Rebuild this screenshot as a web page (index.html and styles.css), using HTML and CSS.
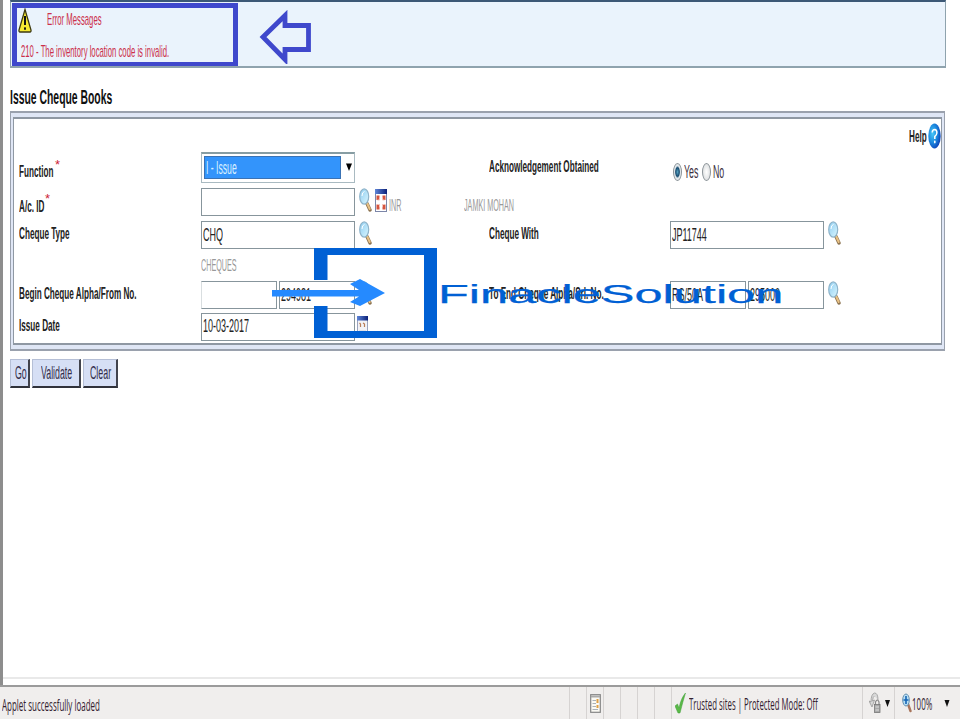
FILE: index.html
```html
<!DOCTYPE html>
<html lang="en">
<head>
    <meta charset="UTF-8">
    <meta name="viewport" content="width=device-width, initial-scale=1.0">
    <title>Issue Cheque Books</title>
    <link rel="stylesheet" href="styles.css">
</head>
<body>
    <!-- Shared icons -->
    <svg class="defs" width="0" height="0">
        <defs>
            <linearGradient id="glass" x1="0" y1="0" x2="1" y2="1">
                <stop offset="0" stop-color="#8fcdf0"/>
                <stop offset="1" stop-color="#d9f6ff"/>
            </linearGradient>
            <radialGradient id="ball" cx="0.35" cy="0.4" r="0.75">
                <stop offset="0" stop-color="#48c8f8"/>
                <stop offset="0.5" stop-color="#1a86dd"/>
                <stop offset="1" stop-color="#0a2fae"/>
            </radialGradient>
            <linearGradient id="bar" x1="0" y1="0" x2="1" y2="0">
                <stop offset="0" stop-color="#5f86d8"/>
                <stop offset="1" stop-color="#0b2078"/>
            </linearGradient>
            <symbol id="search" viewBox="0 0 13 25">
                <path d="M8 15.500L11 22" stroke="#8d7350" stroke-width="3.400" stroke-linecap="round"/>
                <path d="M8.200 15.500L10.700 21" stroke="#e8c184" stroke-width="2" stroke-linecap="round"/>
                <ellipse cx="5.200" cy="8.500" rx="4.500" ry="7.600" fill="url(#glass)" stroke="#8fb4ca" stroke-width="1.200"/>
                <path d="M3 8Q3 4 5.500 3.500" stroke="#fff" stroke-width="1" fill="none"/>
            </symbol>
        </defs>
    </svg>

    <div class="page">
        <!-- Error box -->
        <div class="error-panel">
            <div class="error-box">
                <div class="error-head">
                    <svg class="warn" width="14" height="25" viewBox="0 0 14 25">
                        <path d="M7 1.500L13 22Q13.200 24 12 24H2Q.8 24 1 22Z" fill="#f5e932" stroke="#3d3910" stroke-width="1.300"/>
                        <path d="M7 8V17" stroke="#111" stroke-width="2"/>
                        <ellipse cx="7" cy="20.500" rx="1" ry="1.500" fill="#111"/>
                    </svg>
                    <span class="t err">Error Messages</span>
                </div>
                <div class="error-line"><span class="t err">210 - The inventory location code is invalid.</span></div>
            </div>
            <svg class="left-arrow" width="56" height="54" viewBox="0 0 56 54">
                <path d="M5 27L27 5.500V15.500H50.500V39.500H27V49.500Z" fill="none" stroke="#3f48cc" stroke-width="4.800"/>
            </svg>
        </div>

        <h1><span class="t title">Issue Cheque Books</span></h1>

        <!-- Form -->
        <div class="panel">
            <div class="panel-inner">
                <div class="help">
                    <span class="help-text"><span class="t label">Help</span></span>
                    <svg width="13" height="26" viewBox="0 0 13 26">
                        <ellipse cx="6.500" cy="13" rx="6.200" ry="12.500" fill="url(#ball)"/>
                        <path d="M4.200 9.500Q4.500 6.500 6.700 6.500Q9 6.700 8.900 10Q8.500 12.500 6.800 13.500V16" fill="none" stroke="#fff" stroke-width="1.500"/>
                        <ellipse cx="6.800" cy="19" rx=".9" ry="1.400" fill="#fff"/>
                    </svg>
                </div>
                <div class="row row-function">
                    <div class="name down"><span class="t label">Function</span><span class="star star-function">*</span></div>
                    <div class="field">
                        <div class="select">
                            <div class="selected"><span class="t option">I - Issue</span></div>
                            <svg width="6" height="9" viewBox="0 0 6 9"><path d="M0 0.500H6L3 8Z" fill="#000"/></svg>
                        </div>
                    </div>
                    <div class="name"><span class="t label">Acknowledgement Obtained</span></div>
                    <div class="field radios">
                        <span class="radio checked"></span><span class="radio-text yes"><span class="t plain">Yes</span></span>
                        <span class="radio"></span><span class="radio-text"><span class="t plain">No</span></span>
                    </div>
                </div>
                <div class="row row-account">
                    <div class="name down"><span class="t label">A/c. ID</span><span class="star star-account">*</span></div>
                    <div class="field">
                        <div class="input wide"></div>
                        <svg class="lens" width="13" height="25"><use href="#search"/></svg>
                        <svg class="expand" width="12" height="23" viewBox="0 0 12 23">
                            <rect x=".5" y=".5" width="11" height="22" fill="#fff" stroke="#7c86a8"/>
                            <rect width="12" height="5" fill="url(#bar)"/>
                            <path d="M1.500 6.500H4.500V11H1.500ZM7.500 6.500H10.500V11H7.500ZM1.500 15.500H4.500V20.500H1.500ZM7.500 15.500H10.500V20.500H7.500Z" fill="#d6543e"/>
                            <path d="M4.500 8.500V11H2.500M7.500 8.500V11H9.500M4.500 18V15.500H2.500M7.500 18V15.500H9.500" stroke="#f4c5ba" stroke-width="1" fill="none"/>
                        </svg>
                        <span class="t note inr">INR</span>
                    </div>
                    <div class="name holder"><span class="t note">JAMKI MOHAN</span></div>
                    <div class="field"></div>
                </div>
                <div class="row row-type">
                    <div class="name up"><span class="t label">Cheque Type</span></div>
                    <div class="field">
                        <div class="input wide"><span class="t value">CHQ</span></div>
                        <svg class="lens" width="13" height="25"><use href="#search"/></svg>
                    </div>
                    <div class="name up"><span class="t label">Cheque With</span></div>
                    <div class="field">
                        <div class="input wide"><span class="t value">JP11744</span></div>
                        <svg class="lens" width="13" height="25"><use href="#search"/></svg>
                    </div>
                </div>
                <div class="row row-note">
                    <div class="name"></div>
                    <div class="field cheques"><span class="t note">CHEQUES</span></div>
                </div>
                <div class="row row-number">
                    <div class="name up"><span class="t label">Begin Cheque Alpha/From No.</span></div>
                    <div class="field">
                        <div class="input half blank"></div>
                        <div class="input half"><span class="t value">294981</span></div>
                        <svg class="lens" width="13" height="25"><use href="#search"/></svg>
                    </div>
                    <div class="name up"><span class="t label">To End Cheque Alpha/Srl. No.</span></div>
                    <div class="field">
                        <div class="input half"><span class="t value">RS/50A</span></div>
                        <div class="input half"><span class="t value">295000</span></div>
                        <svg class="lens" width="13" height="25"><use href="#search"/></svg>
                    </div>
                </div>
                <div class="row row-date">
                    <div class="name date"><span class="t label">Issue Date</span></div>
                    <div class="field">
                        <div class="input wide"><span class="t value">10-03-2017</span></div>
                        <svg class="calendar" width="11" height="22" viewBox="0 0 11 22">
                            <rect x=".5" y=".5" width="10" height="21" fill="#f3f3f6" stroke="#9aa3bd"/>
                            <rect width="11" height="4.500" fill="url(#bar)"/>
                            <path d="M2.500 7L3.500 8V11M6 7L7.500 8V11" stroke="#b87d58" stroke-width="1.200" fill="none"/>
                            <path d="M2 15H9" stroke="#cfcfd8"/>
                        </svg>
                    </div>
                </div>
            </div>
        </div>

        <div class="buttons">
            <div class="button go"><span class="t action">Go</span></div>
            <div class="button validate"><span class="t action">Validate</span></div>
            <div class="button clear"><span class="t action">Clear</span></div>
        </div>
    </div>

    <!-- Watermark over the form -->
    <div class="watermark">
        <svg width="166" height="90" viewBox="0 0 166 90">
            <path d="M42 0H165V90H42V58H55.500V83H152V7H55.500V32H42Z" fill="#0060d4"/>
            <path d="M0 42H87L78 36L88 31L113 45L88 58L78 54L87 48.500H0Z" fill="#258aff"/>
        </svg>
        <span class="t brand">FinacleSolution</span>
    </div>

    <!-- Browser status bar -->
    <div class="status">
        <div class="cell message"><span class="t bar-text">Applet successfully loaded</span></div>
        <div class="cell c17"></div>
        <div class="cell c17 report">
            <svg width="11" height="19" viewBox="0 0 11 19">
                <rect x=".7" y=".7" width="9.600" height="17.600" fill="#fbfaf4" stroke="#858585" stroke-width="1.200"/>
                <path d="M1 2.500H10" stroke="#aaa" stroke-width="2"/>
                <path d="M2.500 6.500H6M2.500 9.500H6M2.500 12.500H6M2.500 15.500H8" stroke="#aab2b8"/>
                <path d="M7.500 5V9M7.500 11V14" stroke="#dfa044" stroke-width="2"/>
            </svg>
        </div>
        <div class="cell c17"></div>
        <div class="cell c17"></div>
        <div class="cell c17"></div>
        <div class="cell c17"></div>
        <div class="cell zone">
            <svg width="11" height="21" viewBox="0 0 11 21">
                <path d="M0 13L2.500 11L4 15Q6 5 10.500 0Q8 8 5 20H3Z" fill="#5ab948" stroke="#3e9c36" stroke-width=".5"/>
            </svg>
            <span class="t bar-text zone-text">Trusted sites | Protected Mode: Off</span>
        </div>
        <div class="cell lock">
            <svg width="12" height="22" viewBox="0 0 12 22">
                <path d="M9 8Q9 1 5.500 1Q2 2 2 10L0 9L3 15L5.500 8L3.500 9Q4 4 5.500 4" fill="#d8d8d8" stroke="#999" stroke-width=".8"/>
                <path d="M6.500 13V10Q8.300 6 10 10V13" fill="none" stroke="#888" stroke-width="1.200"/>
                <rect x="5.500" y="12.500" width="5.500" height="8" fill="#a9a9a9" stroke="#777" stroke-width=".8"/>
                <path d="M6.500 15H10M6.500 18H10" stroke="#ddd"/>
            </svg>
            <svg width="5" height="7" viewBox="0 0 5 7"><path d="M0 0H5L2.500 7Z" fill="#111"/></svg>
        </div>
        <div class="cell percent">
            <svg width="10" height="20" viewBox="0 0 10 20">
                <path d="M6 11L8.500 18" stroke="#a8745b" stroke-width="2.400" stroke-linecap="round"/>
                <ellipse cx="4" cy="7" rx="3.300" ry="6" fill="#b9e0f5" stroke="#638eae"/>
                <path d="M1.500 7H6.500M4 3V11" stroke="#1464b4" stroke-width="1.600"/>
            </svg>
            <span class="percent-text"><span class="t bar-text">100%</span></span>
            <svg width="6" height="7" viewBox="0 0 5 7"><path d="M0 0H5L2.500 7Z" fill="#111"/></svg>
        </div>
    </div>
</body>
</html>
```

FILE: styles.css
```css
* {
    box-sizing: border-box;
}

body {
    margin: 0;
    width: 960px;
    height: 720px;
    overflow: hidden;
    background: #fff;
    font-family: "Liberation Sans", Arial, sans-serif;
    color: #222;
    display: flex;
    flex-direction: column;
}

svg {
    display: block;
    flex: none;
}

.defs {
    position: absolute;
}

.page {
    height: 685px;
    flex: none;
    padding: 0 14px 0 7px;
    border-left: 3px solid #8d8d8d;
    background: linear-gradient(#e9e9e9, #e9e9e9) 0 677px / 100% 2px no-repeat;
}

/* condensed text */
.t {
    display: inline-block;
    white-space: nowrap;
    transform-origin: 0 50%;
}

.label {
    font-size: 16px;
    font-weight: bold;
    transform: scaleX(0.51);
}

.title {
    font-size: 20px;
    font-weight: bold;
    color: #111;
    transform: scaleX(0.52);
}

.err {
    font-size: 17px;
    color: #cb2f4b;
    transform: scaleX(0.455);
}

.value {
    font-size: 18px;
    transform: scaleX(0.5);
}

.option {
    font-size: 18px;
    color: #d8f0ff;
    transform: scaleX(0.48);
}

.plain {
    font-size: 18px;
    color: #3c2f40;
    transform: scaleX(0.49);
}

.note {
    font-size: 16px;
    color: #999;
    transform: scaleX(0.45);
}

.action {
    font-size: 18px;
    color: #332d4a;
    transform: scaleX(0.49);
}

.bar-text {
    font-family: "Open Sans", "Noto Sans", sans-serif;
    font-size: 17px;
    color: #33212f;
    transform: scaleX(0.47);
}

.error-panel {
    height: 68px;
    display: flex;
    align-items: flex-start;
    padding: 3px 0 0 1px;
    background: #eaf3fc;
    border: 1px solid #8fa3ae;
    border-top: 2px solid #3c5876;
    border-bottom-width: 2px;
}

.error-box {
    width: 226px;
    height: 63px;
    margin-top: -2px;
    border: 5px solid #3f48cc;
    border-bottom-width: 4px;
    white-space: nowrap;
}

.error-head {
    display: flex;
    height: 26px;
    padding-left: 1px;
}

.error-head .t {
    margin: 3px 0 0 15px;
    line-height: 18px;
}

.error-line {
    padding-left: 4px;
    line-height: 18px;
    margin-top: 9px;
}

.left-arrow {
    margin: 5px 0 0 20px;
}

h1 {
    margin: 0;
    height: 43px;
    padding-top: 18px;
    line-height: 22px;
    font-size: 20px;
}

h1 .t {
    display: block;
    line-height: 22px;
}

.panel {
    width: 935px;
    height: 240px;
    padding: 4px 2px;
    border: 2px solid #9aa1ad;
    border-width: 2px 1px;
    background: #dfe6f5;
}

.panel-inner {
    height: 228px;
    border: 1px solid #8f98a3;
    border-width: 2px 1px;
    background: #fff;
}

.help {
    display: flex;
    justify-content: flex-end;
    align-items: center;
    height: 30px;
    padding: 3px 0 0 0;
    gap: 1px;
}

.help-text {
    width: 18px;
    padding-top: 2px;
}

.row {
    display: grid;
    grid-template-columns: 182px 288px 181px 1fr;
    padding-left: 5px;
}

.row-function { height: 36px; }
.row-account { height: 34px; }
.row-type { height: 32px; }
.row-note { height: 28px; }
.row-number { height: 32px; }
.row-date { height: 31px; }

.name, .field {
    display: flex;
    align-items: center;
    min-width: 0;
}

.down {
    padding-top: 9px;
}

.up {
    padding-bottom: 3px;
}

.date {
    padding-bottom: 2px;
}

.name {
    position: relative;
}

.star {
    position: absolute;
    color: #cc2436;
    font-size: 13px;
    line-height: 14px;
}

.star-function { left: 36px; top: 9px; }
.star-account { left: 26px; top: 7px; }

.holder {
    margin-left: -25px;
    padding-top: 8px;
}

.cheques {
    padding-top: 2px;
}

.input {
    height: 28px;
    flex: none;
    display: flex;
    align-items: center;
    padding-left: 1px;
    background: #fff;
    border: 1px solid #87959c;
    overflow: hidden;
}

.wide {
    width: 154px;
}

.half {
    width: 76px;
}

.half + .half {
    margin-left: 2px;
}

.blank {
    border-left-color: #d9dee0;
}

.lens {
    margin: -4px 0 0 4px;
}

.expand {
    margin: -4px 0 0 3px;
}

.inr {
    margin: 8px 0 0 2px;
}

.calendar {
    margin: 0 0 0 2px;
}

.select {
    width: 154px;
    height: 31px;
    display: flex;
    align-items: center;
    gap: 5px;
    padding-left: 2px;
    border: 1px solid #a9bac1;
    border-top: 2px solid #879da3;
}

.selected {
    width: 137px;
    height: 23px;
    display: flex;
    align-items: center;
    padding: 2px 0 0 1px;
    background: #3394fb;
    border: 1px solid #3a72b4;
}

.radios {
    padding: 9px 0 0 3px;
}

.radio {
    width: 9px;
    height: 18px;
    border: 1px solid #8c9499;
    border-radius: 50%;
    background: radial-gradient(#fff, #d3d6d8);
}

.checked {
    background: radial-gradient(ellipse, #5aa5c4 0, #184c70 38%, #e2e8ec 55%);
}

.radio-text {
    width: 15px;
    margin-left: 2px;
    padding-top: 2px;
}

.yes {
    width: 18px;
}

.buttons {
    display: flex;
    gap: 2px;
    padding-top: 8px;
}

.button {
    height: 29px;
    display: flex;
    align-items: center;
    background: #d6dff5;
    border: 1px solid #b5bfd6;
    border-right: 2px solid #41434d;
    border-bottom: 2px solid #30323a;
}

.go { width: 20px; padding-left: 4px; }
.validate { width: 49px; padding-left: 8px; }
.clear { width: 35px; padding-left: 6px; }

.watermark {
    position: absolute;
    left: 272px;
    top: 248px;
    width: 520px;
    display: flex;
}

.brand {
    margin: 32px 0 0 0;
    font-size: 25px;
    line-height: 29px;
    color: #0060d4;
    -webkit-text-stroke: 0.25px #0060d4;
    transform: scaleX(2.02);
}

.status {
    height: 34px;
    flex: none;
    display: flex;
    background: #f0eeed;
    border-top: 2px solid #9b9b9b;
}

.cell {
    display: flex;
    align-items: center;
    flex: none;
    border-right: 1px solid #d6d3d2;
    overflow: hidden;
}

.message { width: 570px; padding: 3px 0 0 2px; }
.c17 { width: 17px; }
.report { padding-left: 3px; }
.zone { width: 191px; padding-left: 3px; gap: 3px; }
.zone-text { transform: scaleX(0.46); }
.lock { width: 32px; padding-left: 6px; gap: 4px; }
.percent { width: 65px; padding-left: 7px; border: none; }

.percent-text {
    width: 31px;
    flex: none;
    margin-right: 1px;
}
```
